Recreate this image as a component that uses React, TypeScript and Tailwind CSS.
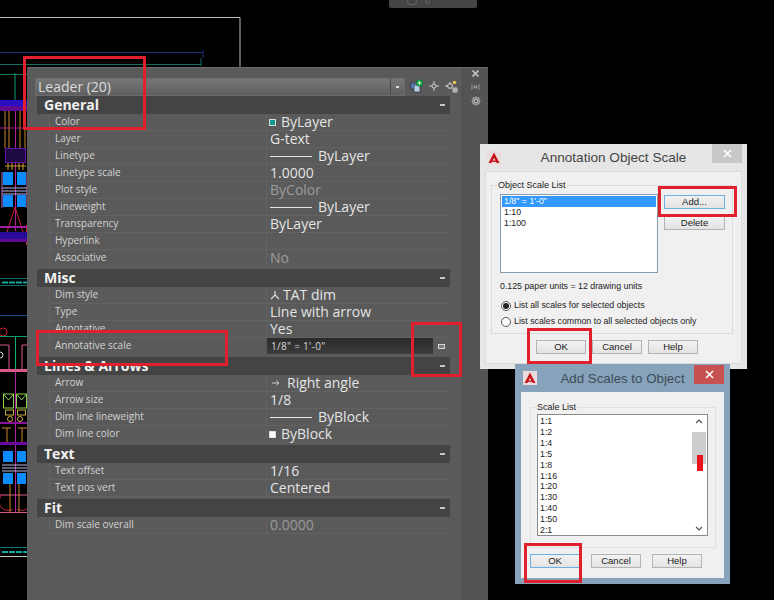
const sans = "font-['Open_Sans','Noto_Sans',sans-serif]";
const win = "font-['Liberation_Sans',Arial,sans-serif]";

type Row = { label: string; value?: React.ReactNode; dim?: boolean };
type Section = { title: string; rows: Row[]; top: string };

function LineVal({ text, w = 42 }: { text: string; w?: number }) {
  return (
    <span className="flex items-center gap-[6px]">
      <span className="h-px bg-[#e6e6e6]" style={{ width: w }} />
      {text}
    </span>
  );
}

function Swatch({ color, text }: { color: string; text: string }) {
  return (
    <span className="flex items-center gap-[5px] -ml-px">
      <span className={`w-[7px] h-[7px] border border-[#ddd] ${color}`} />
      {text}
    </span>
  );
}

const sections: Section[] = [
  {
    title: "General",
    top: "mt-0",
    rows: [
      { label: "Color", value: <Swatch color="bg-[#0e9a94]" text="ByLayer" /> },
      { label: "Layer", value: "G-text" },
      { label: "Linetype", value: <LineVal text="ByLayer" /> },
      { label: "Linetype scale", value: "1.0000" },
      { label: "Plot style", value: "ByColor", dim: true },
      { label: "Lineweight", value: <LineVal text="ByLayer" /> },
      { label: "Transparency", value: "ByLayer" },
      { label: "Hyperlink" },
      { label: "Associative", value: "No", dim: true },
    ],
  },
  {
    title: "Misc",
    top: "mt-[2px]",
    rows: [
      {
        label: "Dim style",
        value: (
          <span className="flex items-center gap-[3px]">
            <svg width="10" height="10" viewBox="0 0 10 10" fill="none" stroke="#ddd" strokeWidth="1.2">
              <path d="M5 1v4M5 5L1 9M5 5l4 4" />
            </svg>
            TAT dim
          </span>
        ),
      },
      { label: "Type", value: "Line with arrow" },
      { label: "Annotative", value: "Yes" },
    ],
  },
];

const afterScale: Section[] = [
  {
    title: "Lines & Arrows",
    top: "mt-[2px]",
    rows: [
      {
        label: "Arrow",
        value: (
          <span className="flex items-center gap-[6px] ml-[1px]">
            <svg width="10" height="8" viewBox="0 0 10 8" fill="none" stroke="#ccc" strokeWidth="1">
              <path d="M1 4h7M5.5 1.5L8 4 5.5 6.5" />
            </svg>
            Right angle
          </span>
        ),
      },
      { label: "Arrow size", value: "1/8" },
      { label: "Dim line lineweight", value: <LineVal text="ByBlock" /> },
      { label: "Dim line color", value: <Swatch color="bg-white" text="ByBlock" /> },
    ],
  },
  {
    title: "Text",
    top: "mt-[2px]",
    rows: [
      { label: "Text offset", value: "1/16" },
      { label: "Text pos vert", value: "Centered" },
    ],
  },
  {
    title: "Fit",
    top: "mt-[2px]",
    rows: [{ label: "Dim scale overall", value: "0.0000", dim: true }],
  },
];

function Header({ title, top }: { title: string; top: string }) {
  return (
    <div className={`h-[18px] bg-[#444444] flex items-center justify-between pl-[7px] pr-[5px] ${top}`}>
      <span className="text-[14px] font-bold text-[#f2f2f2] leading-none">{title}</span>
      <span className="w-[5px] h-[2px] bg-[#c8c8c8]" />
    </div>
  );
}

function PropRow({ row }: { row: Row }) {
  return (
    <div className="ml-[12px] h-[17px] flex border-b border-l border-[#626262]">
      <div className="w-[217px] pl-[5px] text-[10px] leading-[15px] text-[#d2d2d2] border-r border-[#626262]">{row.label}</div>
      <div className={`pl-[3px] text-[14px] leading-[16px] ${row.dim ? "text-[#9a9a9a]" : "text-[#e4e4e4]"}`}>{row.value}</div>
    </div>
  );
}

function Rows({ items }: { items: Section[] }) {
  return (
    <>
      {items.map((s) => (
        <div key={s.title}>
          <Header title={s.title} top={s.top} />
          {s.rows.map((r) => (
            <PropRow key={r.label} row={r} />
          ))}
        </div>
      ))}
    </>
  );
}

function Palette() {
  return (
    <div className={`absolute left-[27px] top-[67px] w-[461px] h-[533px] bg-[#545454] flex border-t border-[#6a6a6a] ${sans}`}>
      <div className="w-[436px] h-full bg-[#5a5a5a] pl-[8px] pt-[10px] border-r border-[#4c4c4c]">
        <div className="flex items-start">
          <div className="w-[370px] h-[18px] rounded-t-[1px] bg-gradient-to-b from-[#767676] to-[#5f5f5f] flex justify-between border border-[#6c6c6c]">
            <span className="pl-[2px] text-[14px] leading-[16px] text-[#dcdcdc]">Leader (20)</span>
            <span className="w-[14px] border-l border-[#484848] flex items-center justify-center">
              <span className="w-[3px] h-[2px] bg-[#ddd]" />
            </span>
          </div>
          <div className="flex items-center gap-[5px] ml-[5px] mt-[1px]">
            <svg width="14" height="14" viewBox="0 0 14 14">
              <rect x="1" y="4" width="6" height="6" fill="#5e88c9" stroke="#222" strokeWidth="0.6" />
              <rect x="4" y="6" width="6" height="7" fill="#b6cde8" stroke="#222" strokeWidth="0.6" />
              <circle cx="9.5" cy="4" r="3.2" fill="#11a83c" stroke="#063" strokeWidth="0.6" />
              <path d="M9.5 2v4M7.5 4h4" stroke="#fff" strokeWidth="0.8" />
            </svg>
            <svg width="10" height="10" viewBox="0 0 12 12" fill="none" stroke="#e2e2e2" strokeWidth="1">
              <circle cx="6" cy="6" r="2.4" />
              <path d="M6 0v3.5M6 8.5V12M0 6h3.5M8.5 6H12" />
            </svg>
            <svg width="14" height="14" viewBox="0 0 14 14" fill="none" stroke="#e2e2e2" strokeWidth="1">
              <circle cx="6" cy="7" r="2.4" />
              <path d="M6 3v1.5M1 7h2.5" />
              <circle cx="10.5" cy="3.5" r="1.8" fill="#e3c24a" stroke="none" />
              <path d="M9 9h4v4H9zM11 9v4M9 11h4" strokeWidth="0.8" />
            </svg>
          </div>
        </div>
        <div className="w-[413px] ml-[2px]">
          <Rows items={sections} />
          <div className="ml-[12px] h-[17px] flex border-l border-[#626262]">
            <div className="w-[217px] pl-[5px] text-[10px] leading-[15px] text-[#d2d2d2]">Annotative scale</div>
            <div className="w-[166px] h-[16px] bg-gradient-to-b from-[#2a2a2a] to-[#3c3c3c] pl-[4px] text-[10px] tracking-[0.3px] leading-[16px] text-[#d8d8d8]">1/8" = 1'-0"</div>
            <div className="flex-1 flex items-center justify-center">
              <span className="w-[7px] h-[5px] border border-[#d6d6d6] bg-[#777]" />
            </div>
          </div>
          <Rows items={afterScale} />
        </div>
      </div>
      <div className="flex-1 flex flex-col items-center gap-[5px] pt-[1px]">
        <svg width="9" height="9" viewBox="0 0 9 9" stroke="#c8c8c8" strokeWidth="1.6"><path d="M1.5 1.5l6 6M7.5 1.5l-6 6" /></svg>
        <svg width="9" height="8" viewBox="0 0 9 8" stroke="#a8a8a8" fill="#a8a8a8" strokeWidth="0.8"><path d="M1 1v6M8 1v6" /><path d="M2.2 4l2-2v4zM6.8 4l-2-2v4z" stroke="none" /></svg>
        <svg width="10" height="10" viewBox="0 0 10 10" fill="none" stroke="#b8b8b8" strokeWidth="1"><path d="M2 2h6v6H2zM0.5 5H2M8 5h1.5M5 0.5V2M5 8v1.5M3.5 3.5h3v3h-3z" /></svg>
      </div>
    </div>
  );
}

function Btn({ label, focus, w = "w-[50px]" }: { label: string; focus?: boolean; w?: string }) {
  return (
    <div className={`${w} h-[14px] border text-center text-[9.5px] leading-[12px] text-[#222] bg-gradient-to-b from-[#f2f2f2] to-[#e3e3e3] ${focus ? "border-[#6fb0e2]" : "border-[#b4b4b4]"}`}>
      {label}
    </div>
  );
}

function AcadLogo() {
  return (
    <svg width="14" height="14" viewBox="0 0 14 14">
      <rect width="14" height="14" fill="#eadcdc" />
      <path d="M7 1.5L12.5 12H9.6L7 7 4.4 12H1.5z" fill="#c5161d" />
      <rect x="4.5" y="9.5" width="5" height="1.4" fill="#c5161d" />
    </svg>
  );
}

function Radio({ on, label }: { on?: boolean; label: string }) {
  return (
    <div className="flex items-center gap-[3px] h-[16px]">
      <span className="w-[10px] h-[10px] rounded-full border border-[#555] bg-white flex items-center justify-center">
        {on && <span className="w-[6px] h-[6px] rounded-full bg-[#222]" />}
      </span>
      <span className="text-[8.8px] text-[#222]">{label}</span>
    </div>
  );
}

function ScaleDialog() {
  return (
    <div className={`absolute left-[480px] top-[144px] w-[267px] h-[225px] bg-[#e6e6e6] px-[5px] ${win}`}>
      <div className="h-[27px] relative flex items-center justify-center">
        <div className="absolute left-[2px] top-[7px]"><AcadLogo /></div>
        <span className="mt-[2px] text-[13.6px] text-[#454545]">Annotation Object Scale</span>
        <div className="absolute right-0 top-0 w-[30px] h-[19px] bg-[#c8c8c8] flex items-center justify-center">
          <svg width="9" height="9" viewBox="0 0 9 9" stroke="#fff" strokeWidth="1.6"><path d="M1 1l7 7M8 1l-7 7" /></svg>
        </div>
      </div>
      <div className="h-[193px] bg-[#f0f0f0] border border-[#dcdcdc] pt-[13px] pl-[5px] pr-[8px]">
        <div className="relative h-[149px] border border-[#dcdcdc] pl-[8px] pt-[8px]">
          <span className="absolute left-[5px] -top-[6px] bg-[#f0f0f0] px-[1px] text-[9px] leading-[11px] text-[#222]">Object Scale List</span>
          <div className="flex">
            <div className="w-[158px] h-[79px] bg-white border border-[#8a9bb0] pt-px px-px text-[8.8px] leading-[11px] text-[#222]">
              <div className="bg-[#3399ff] text-white pl-[2px]">1/8" = 1'-0"</div>
              <div className="pl-[2px]">1:10</div>
              <div className="pl-[2px]">1:100</div>
            </div>
            <div className="ml-[6px] flex flex-col gap-[7px] pt-[1px]">
              <Btn label="Add..." focus w="w-[61px]" />
              <Btn label="Delete" w="w-[61px]" />
            </div>
          </div>
          <div className="mt-[8px] text-[8.8px] leading-[11px] text-[#222]">0.125 paper units = 12 drawing units</div>
          <div className="mt-[6px] pl-[1px]">
            <Radio on label="List all scales for selected objects" />
            <Radio label="List scales common to all selected objects only" />
          </div>
        </div>
        <div className="flex gap-[6px] pl-[45px] pt-[6px]">
          <Btn label="OK" />
          <Btn label="Cancel" />
          <Btn label="Help" />
        </div>
      </div>
    </div>
  );
}

const scales = ["1:1", "1:2", "1:4", "1:5", "1:8", "1:16", "1:20", "1:30", "1:40", "1:50", "2:1"];

function AddDialog() {
  return (
    <div className={`absolute left-[515px] top-[364px] w-[215px] h-[220px] bg-[#86a3bb] px-[6px] ${win}`}>
      <div className="h-[28px] relative flex items-center justify-center">
        <div className="absolute left-[2px] top-[7px]"><AcadLogo /></div>
        <span className="mt-[2px] text-[13.3px] text-[#3d4c58]">Add Scales to Object</span>
        <div className="absolute right-0 top-[1px] w-[30px] h-[19px] bg-[#c75050] flex items-center justify-center">
          <svg width="9" height="9" viewBox="0 0 9 9" stroke="#fff" strokeWidth="1.6"><path d="M1 1l7 7M8 1l-7 7" /></svg>
        </div>
      </div>
      <div className="h-[186px] bg-[#f0f0f0] pt-[15px] pl-[9px] pr-[8px]">
        <div className="relative h-[141px] border border-[#e0e0e0] pl-[6px] pt-[6px] pr-[7px]">
          <span className="absolute left-[5px] -top-[6px] bg-[#f0f0f0] px-[1px] text-[9px] leading-[11px] text-[#222]">Scale List</span>
          <div className="h-[122px] bg-white border border-[#8a8a8a] flex justify-between pl-[2px] pr-[1px]">
            <div className="text-[8.8px] leading-[10.9px] text-[#222] pt-[1px]">
              {scales.map((s) => (
                <div key={s}>{s}</div>
              ))}
            </div>
            <div className="relative w-[14px] flex flex-col justify-between items-center py-[4px]">
              <svg width="8" height="5" viewBox="0 0 8 5" fill="none" stroke="#555" strokeWidth="1.2"><path d="M1 4l3-3 3 3" /></svg>
              <svg width="8" height="5" viewBox="0 0 8 5" fill="none" stroke="#555" strokeWidth="1.2"><path d="M1 1l3 3 3-3" /></svg>
              <div className="absolute left-0 top-[17px] w-[14px] h-[32px] bg-[#cdcdcd]" />
              <div className="absolute left-[5px] top-[40px] w-[6px] h-[16px] bg-[#e8141f]" />
            </div>
          </div>
        </div>
        <div className="flex gap-[11px] pt-[6px]">
          <Btn label="OK" focus />
          <Btn label="Cancel" />
          <Btn label="Help" />
        </div>
      </div>
    </div>
  );
}

// drawing behind the palette, only the left strip shows
function Drawing() {
  return (
    <svg className="absolute inset-0" width="774" height="600" viewBox="0 0 774 600" fill="none">
      <path d="M0 17.5H240V67" stroke="#bdbdbd" />
      <path d="M0 52.5H203M203 50v8" stroke="#1a2f72" />
      <path d="M0 64.5H201M201 58v8" stroke="#0f6f60" />
      <path d="M0 74.5H27" stroke="#0f7d62" />
      <path d="M15 73v29" stroke="#0f9d70" />
      <rect x="0" y="100" width="27" height="6" fill="#2a10c0" />
      <rect x="0" y="106" width="27" height="5" fill="#600a90" />
      <path d="M5 111v37M9 111v37M20 111v37M25 111v37" stroke="#c8862a" />
      <path d="M0 128H27" stroke="#a02090" />
      <path d="M15.5 111v120" stroke="#b0209a" />
      <rect x="5.5" y="148.5" width="20" height="14" stroke="#6a0fb0" fill="#1a0a40" />
      <path d="M5 166h21M8 163v7M12 163v7M19 163v7M23 163v7" stroke="#c8a030" />
      <rect x="3" y="172" width="10" height="13" fill="#0a8cff" />
      <rect x="17" y="172" width="9" height="13" fill="#0a8cff" />
      <rect x="3" y="195" width="10" height="12" fill="#0a8cff" />
      <rect x="17" y="195" width="9" height="12" fill="#0a8cff" />
      <path d="M2 188H27M2 191H27M2 194H27" stroke="#b8b8e8" />
      <path d="M2 172v36M27 172v36" stroke="#c070c0" />
      <path d="M15 207L7 232M15 207l8 25M26.5 225v20" stroke="#c8203a" />
      <rect x="0" y="226" width="27" height="2" fill="#a020a0" />
      <rect x="0" y="232" width="27" height="7" fill="#2a0a9a" />
      <rect x="0" y="239" width="27" height="3" fill="#600a90" />
      <path d="M0 278.5H27M0 285.5H27" stroke="#0f6f60" />
      <path d="M2 282.5H27" stroke="#10a8a0" strokeWidth="2" strokeDasharray="6 1" />
      <path d="M0 315.5H27" stroke="#1f4f96" />
      <circle cx="3" cy="332" r="4" stroke="#c8203a" />
      <path d="M0 336.5H27" stroke="#0f9d70" />
      <path d="M15.5 337v33" stroke="#10b070" />
      <path d="M0 345h9v25M27 345h-5v25" stroke="#d85a8a" />
      <circle cx="0" cy="355" r="3" stroke="#ccc" />
      <rect x="0" y="369" width="27" height="3" fill="#d85a8a" />
      <path d="M15.5 372v140" stroke="#b0209a" />
      <rect x="3.5" y="394" width="10" height="14" stroke="#8ad04a" />
      <rect x="16.5" y="394" width="10" height="14" stroke="#8ad04a" />
      <path d="M3.5 394l5 6 5-6M16.5 394l5 6 5-6" stroke="#8ad04a" />
      <rect x="5.5" y="410" width="8" height="5" stroke="#c8b040" />
      <rect x="17.5" y="410" width="8" height="5" stroke="#c8b040" />
      <circle cx="10" cy="419" r="2.5" stroke="#c8b040" />
      <circle cx="20" cy="419" r="2.5" stroke="#c8b040" />
      <rect x="0" y="422" width="27" height="2" fill="#8a10a0" />
      <path d="M2 428h9M7 428v14M18 428h9M22 428v14" stroke="#c8862a" />
      <rect x="0" y="442" width="27" height="3" fill="#6a0a9a" />
      <rect x="3" y="451" width="10" height="11" fill="#0a8cff" />
      <rect x="17" y="451" width="9" height="11" fill="#0a8cff" />
      <rect x="3" y="473" width="10" height="11" fill="#0a8cff" />
      <rect x="17" y="473" width="9" height="11" fill="#0a8cff" />
      <path d="M2 465H27M2 468H27M2 471H27" stroke="#b8b8e8" />
      <path d="M0 495H27" stroke="#d85a8a" />
      <path d="M0 512.5H27" stroke="#d85a8a" />
      <path d="M3 494a8 8 0 0 0 10 15M27 494a8 8 0 0 1-10 15" stroke="#c8203a" />
      <path d="M10 484v28M19 484v28" stroke="#c8862a" />
      <path d="M0 547.5H27" stroke="#0f7d70" />
      <path d="M2 552H27" stroke="#10a8a0" strokeWidth="2" strokeDasharray="6 1" />
      <path d="M0 556.5H27" stroke="#c8c8c8" />
    </svg>
  );
}

function Marks() {
  const cls = "absolute border-[3px] border-[#e0202c] pointer-events-none";
  return (
    <>
      <div className={`${cls} left-[23px] top-[56px] w-[123px] h-[74px]`} />
      <div className={`${cls} left-[36px] top-[330px] w-[192px] h-[36px]`} />
      <div className={`${cls} left-[411px] top-[322px] w-[51px] h-[55px]`} />
      <div className={`${cls} left-[658px] top-[186px] w-[79px] h-[31px]`} />
      <div className={`${cls} left-[527px] top-[328px] w-[65px] h-[36px]`} />
      <div className={`${cls} left-[524px] top-[543px] w-[58px] h-[40px]`} />
    </>
  );
}

export default function App() {
  return (
    <div className="relative w-[774px] h-[600px] overflow-hidden bg-black">
      <Drawing />
      <div className="absolute left-[389px] top-0 w-[88px] h-[8px] bg-[#454545] rounded-b-[2px] flex items-start pl-[18px] gap-[8px]">
        <span className="w-[10px] h-[7px] -mt-[2px] rounded-full border border-[#666]" />
        <span className="w-[5px] h-[5px] -mt-[1px] rounded-full border border-[#666]" />
      </div>
      <Palette />
      <ScaleDialog />
      <AddDialog />
      <Marks />
    </div>
  );
}
